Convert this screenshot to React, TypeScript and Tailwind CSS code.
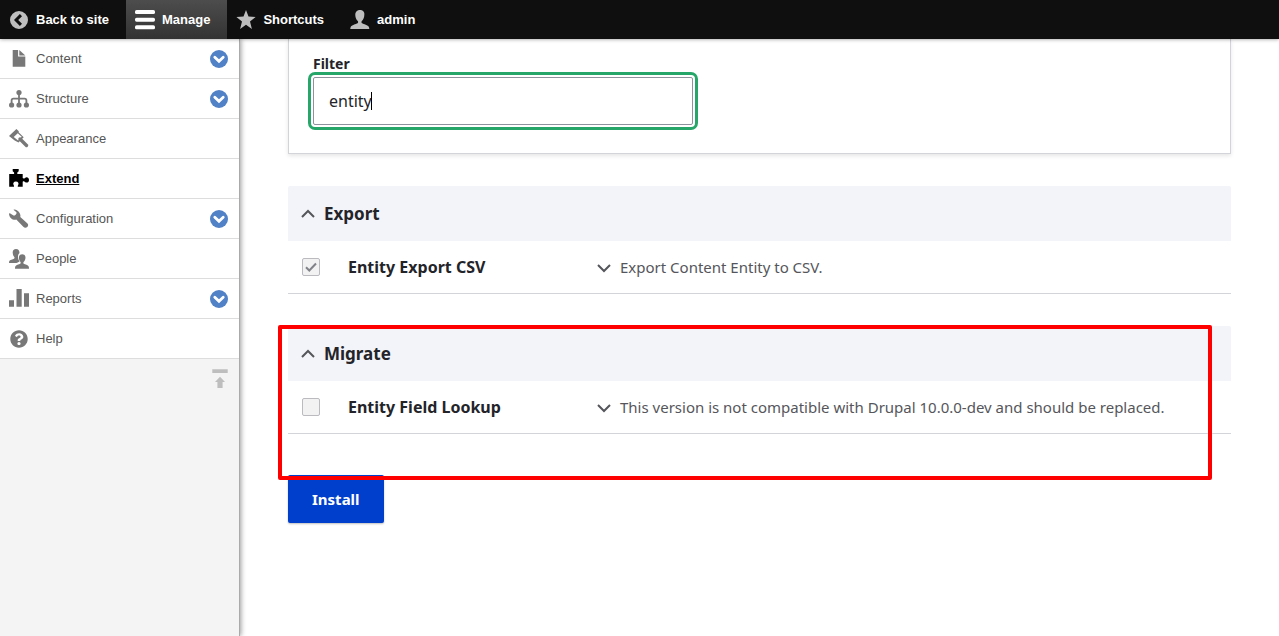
import { useState, type ReactNode } from "react";
import { FaQuestionCircle } from "react-icons/fa";

const Icon = ({ children }: { children: ReactNode }) => (
  <svg viewBox="0 0 20 20" className="h-5 w-5 shrink-0" fill="currentColor" aria-hidden>
    {children}
  </svg>
);

const icons = {
  back: (
    <Icon>
      <path
        fillRule="evenodd"
        d="M10 1a9 9 0 1 0 0 18 9 9 0 0 0 0-18zm3 5.2L9.2 10l3.8 3.8-2.1 2.1L5 10l5.9-5.9z"
      />
    </Icon>
  ),
  menu: (
    <Icon>
      <rect x="0" y="0" width="20" height="4" rx="1.6" />
      <rect x="0" y="7.7" width="20" height="4" rx="1.6" />
      <rect x="0" y="15.3" width="20" height="4" rx="1.6" />
    </Icon>
  ),
  star: (
    <Icon>
      <path d="M9.500 0l2.500 6.600 7.100.3-5.600 4.500 1.900 7.700-5.900-4.300-5.900 4.300 1.900-7.700L-.1 6.900l7.100-.3z" transform="translate(.5)" />
    </Icon>
  ),
  user: (
    <Icon>
      <path d="M10 0c-3.100 0-4.800 2.200-4.700 5.200.1 2.400 1 4.500 2.500 5.800.5.500.4 1.900-.2 2.300-1.600 1-6.100 1.700-6.900 3.700-.3.700-.4 1.300-.4 2h19c0-.7-.1-1.300-.4-2-.8-2-5.300-2.700-6.900-3.700-.6-.4-.7-1.800-.2-2.300 1.500-1.300 2.400-3.400 2.500-5.800C14.800 2.200 13.100 0 10 0z" />
    </Icon>
  ),
  file: (
    <Icon>
      <path d="M3.700 1h5.400v6.600h7.200v10.100H3.700z" />
      <path d="M10.300 1l6 5.400h-6z" />
    </Icon>
  ),
  structure: (
    <Icon>
      <circle cx="10" cy="3.500" r="2.600" />
      <circle cx="2.600" cy="16" r="2.600" />
      <circle cx="10" cy="16" r="2.600" />
      <circle cx="17.400" cy="16" r="2.600" />
      <path
        d="M10 4v12M2.600 15v-3.500q0-1.800 1.800-1.800h11.200q1.800 0 1.800 1.800V15"
        fill="none"
        stroke="currentColor"
        strokeWidth="1.800"
      />
    </Icon>
  ),
  brush: (
    <Icon>
      <path
        fillRule="evenodd"
        d="M7.400 0L9.800 2.300l-.2 1 5.100 4.900-5.200 5.400-3.800-2L0 6.900zM8.800 4.200L4.700 8l4.400 3.500 3.600-3.700z"
      />
      <path d="M11 10l6.500 6.500" stroke="currentColor" strokeWidth="3.400" strokeLinecap="round" />
    </Icon>
  ),
  puzzle: (
    <Icon>
      <path d="M3.700 0h6v2.300L8.300 3.500V5h5.400v4.100c.6.600 1.600.6 2.300-.2 1.300-1.300 4-.8 4 2s-2.700 3.300-4 2c-.7-.8-1.700-.8-2.300-.2v5H8.900c-.4-.6-.1-1.200.3-1.800.9-1.300 0-3.300-2.300-3.300s-3.200 2-2.300 3.300c.4.600.7 1.200.3 1.800H.2V5h4.900V3.500L3.700 2.300z" />
    </Icon>
  ),
  wrench: (
    <Icon>
      <path d="M18.500 14.600l-7.200-6.500c.8-3.500-1.900-7-5.900-7.600-.8-.1-.9.300-.4.700l2.200 1.900c.5.500.4 1.100.1 1.600-.3.700-.9 1.400-1.600 1.700-.5.300-1.100.3-1.600-.1L1.300 4.500C.7 4-.1 4.200 0 5c.5 4.200 4.100 6.500 7.300 5.600l7 7.200c1.200 1.200 2.800 1.200 4 .2 1-1 1.200-2.400.2-3.400z" />
    </Icon>
  ),
  people: (
    <Icon>
      <path d="M7 0C4.800 0 3.600 1.600 3.700 3.700c.1 1.800.6 3.300 1.600 4.300.4.500.2 1.400-.3 1.700-1.200.7-4.200 1-4.700 2.300-.2.700-.3 1.300-.3 2h7.500c.6-.4 1.900-.7 2.700-1.200.3-.2.300-.5.100-.8-.9-1.200-1.300-2.800-1.300-4.200 0-1.800.5-3.100 1.500-3.900C10.400 1.600 9.400 0 7 0z" />
      <path d="M13.200 5.200c-2.300 0-3.400 1.500-3.300 3.600.1 1.800.6 3.200 1.600 4.200.4.400.2 1.400-.2 1.700-1.300.8-4.500 1.200-5 2.700-.2.500-.3 1.700-.3 2.400h14c0-.7-.1-1.900-.3-2.400-.5-1.500-3.700-1.900-5-2.700-.4-.3-.5-1.300-.1-1.700 1-1 1.800-2.400 1.900-4.200.1-2.100-1-3.600-3.300-3.600z" />
    </Icon>
  ),
  chart: (
    <Icon>
      <path d="M0 11.300h5v6.400H0zM7.500 0h5.200v17.700H7.500zM15 4.300h5v13.400h-5z" />
    </Icon>
  ),
  help: (
    <span className="flex h-5 w-5 shrink-0 items-center justify-center">
      <FaQuestionCircle size={18} aria-hidden />
    </span>
  ),
};

const tabs = [
  { label: "Back to site", icon: icons.back },
  { label: "Manage", icon: icons.menu, active: true },
  { label: "Shortcuts", icon: icons.star },
  { label: "admin", icon: icons.user },
];

const menu = [
  { label: "Content", icon: icons.file, expandable: true },
  { label: "Structure", icon: icons.structure, expandable: true },
  { label: "Appearance", icon: icons.brush },
  { label: "Extend", icon: icons.puzzle, active: true },
  { label: "Configuration", icon: icons.wrench, expandable: true },
  { label: "People", icon: icons.people },
  { label: "Reports", icon: icons.chart, expandable: true },
  { label: "Help", icon: icons.help },
];

const Toolbar = () => (
  <header className="relative z-20 flex h-[39px] bg-[#0f0f0f] text-[13px] font-bold text-white shadow-[0_0_4px_rgba(0,0,0,0.45)]">
    {tabs.map((t) => (
      <a
        key={t.label}
        href="#"
        className={`flex items-center gap-[7px] pr-[17px] pl-[9px] ${
          t.active ? "bg-linear-to-b from-[#4d4d4d] to-[#333]" : ""
        }`}
      >
        <span className={t.active ? "text-white" : "text-[#bebebe]"}>{t.icon}</span>
        {t.label}
      </a>
    ))}
  </header>
);

const Sidebar = () => (
  <nav className="relative z-10 w-60 shrink-0 border-r border-[#aaa] bg-[#f4f4f4] text-[13px] text-[#565656] shadow-[1px_0_5px_rgba(0,0,0,0.4)]">
    <ul>
      {menu.map((m) => (
        <li key={m.label} className="flex h-10 items-center border-b border-[#ddd] bg-white pr-[11px]">
          <a
            href="#"
            className={`flex flex-1 items-center gap-[7px] pl-[9px] ${m.active ? "font-bold text-black underline" : ""}`}
          >
            <span className={m.active ? "text-black" : "text-[#787878]"}>{m.icon}</span>
            {m.label}
          </a>
          {m.expandable && (
            <button type="button" aria-label={`Extend ${m.label}`}>
              <svg viewBox="0 0 18 18" className="h-[18px] w-[18px]" aria-hidden>
                <circle cx="9" cy="9" r="9" fill="#5181c6" />
                <path d="M4.800 7.200L9 11.300l4.200-4.100" fill="none" stroke="#fff" strokeWidth="2.800" strokeLinecap="round" />
              </svg>
            </button>
          )}
        </li>
      ))}
    </ul>
    <div className="flex justify-end pt-[9px] pr-[9px]">
      <button type="button" aria-label="Horizontal orientation" className="text-[#bebebe]">
        <Icon>
          <path d="M2.300 1.300h15.400v3.600H2.300zM10 8.800l5 5.200h-2.400v6H7.400v-6H5z" />
        </Icon>
      </button>
    </div>
  </nav>
);

const Chevron = ({ up }: { up?: boolean }) => (
  <svg viewBox="0 0 14 14" className="h-[14px] w-[14px] shrink-0" aria-hidden>
    <path d={up ? "M1 10l6-6 6 6" : "M1 5l6 6 6-6"} fill="none" stroke="#55565b" strokeWidth="2" />
  </svg>
);

interface ModuleGroupProps {
  title: string;
  name: string;
  description: string;
  checked?: boolean;
}

const ModuleGroup = ({ title, name, description, checked = false }: ModuleGroupProps) => {
  const id = name.toLowerCase().replace(/ /g, "-");
  return (
    <details open>
      <summary className="flex h-[55px] cursor-pointer items-center gap-[9px] rounded-t-[2px] bg-[#f3f4f9] pl-[13px] text-[17px] font-bold">
        <Chevron up />
        {title}
      </summary>
      <table className="w-full border-separate border-spacing-0 border-b border-[#d3d4d9]">
        <tbody>
          <tr className="h-[52px]">
            <td className="w-[60px] pl-[14px]">
              <span className="relative block h-[18px] w-[18px]">
                <input
                  id={id}
                  type="checkbox"
                  disabled
                  defaultChecked={checked}
                  className="block h-[18px] w-[18px] appearance-none rounded-[2px] border border-[#bababf] bg-[#f2f2f3]"
                />
                {checked && (
                  <svg viewBox="0 0 18 18" className="absolute inset-0" aria-hidden>
                    <path d="M4 9.300l3.300 3.200 6.700-7" fill="none" stroke="#828388" strokeWidth="2" />
                  </svg>
                )}
              </span>
            </td>
            <td className="w-[249px] text-[16px] font-bold">
              <label htmlFor={id}>{name}</label>
            </td>
            <td className="text-[15px] text-[#55565b]">
              <details>
                <summary className="flex cursor-pointer items-center gap-[9px]">
                  <Chevron />
                  {description}
                </summary>
              </details>
            </td>
          </tr>
        </tbody>
      </table>
    </details>
  );
};

const App = () => {
  const [filter, setFilter] = useState("entity");

  return (
    <div className="flex min-h-screen flex-col bg-white font-['Liberation_Sans',Arial,sans-serif]">
      <Toolbar />
      <div className="flex flex-1">
        <Sidebar />
        <main className="flex-1 px-12 pb-12 font-['Noto_Sans','Open_Sans',sans-serif] text-[#232429]">
          <div className="border-x border-b border-[#d3d4d9] px-6 pt-4 pb-7 shadow-[0_2px_4px_rgba(0,0,0,0.1)]">
            <label htmlFor="filter" className="mb-1 block text-[14px] leading-[18px] font-bold">
              Filter
            </label>
            <div className="relative w-[380px]">
              <input
                id="filter"
                type="text"
                value={filter}
                onChange={(e) => setFilter(e.target.value)}
                className="block h-12 w-full rounded-[2px] border border-[#8e929c] px-[15px] text-[16px] caret-transparent outline-3 outline-offset-2 outline-[#26a769]"
              />
              <span className="absolute top-[15px] left-[58px] h-[18px] w-px bg-black" />
            </div>
          </div>

          <div className="mt-8">
            <ModuleGroup
              title="Export"
              name="Entity Export CSV"
              description="Export Content Entity to CSV."
              checked
            />
          </div>

          <div className="relative mt-8">
            <ModuleGroup
              title="Migrate"
              name="Entity Field Lookup"
              description="This version is not compatible with Drupal 10.0.0-dev and should be replaced."
            />
            <div className="pointer-events-none absolute -top-px right-[19px] -bottom-[46px] -left-[10px] z-10 rounded-[2px] border-4 border-[#f00]" />
          </div>

          <button
            type="button"
            className="mt-[41px] h-12 rounded-[2px] bg-[#003ecc] px-6 text-[15px] font-bold text-white shadow-[0_1px_2px_rgba(0,0,0,0.25)]"
          >
            Install
          </button>
        </main>
      </div>
    </div>
  );
};

export default App;
